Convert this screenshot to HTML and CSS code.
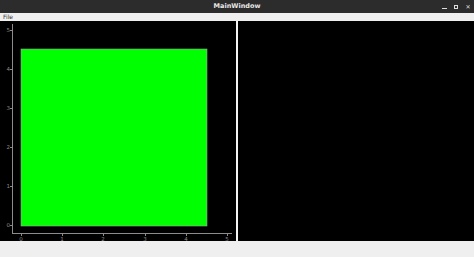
FILE: index.html
```html
<!DOCTYPE html>
<html>
<head>
<meta charset="utf-8">
<link rel="stylesheet" href="styles.css">
</head>
<body>
<div class="window">
  <div class="titlebar">
    <span class="title">MainWindow</span>
    <div class="controls">
      <span class="ctl min"></span>
      <span class="ctl max"></span>
      <span class="ctl close">✕</span>
    </div>
  </div>
  <div class="menubar"><span class="menu">File</span></div>
  <div class="main">
    <div class="plot">
      <svg width="236" height="220" viewBox="0 0 236 220">
        <rect x="21" y="28" width="186" height="177" fill="#00ff00" stroke="#a0a0a0" stroke-width="0.6"/>
        <g stroke="#8c8c8c" stroke-width="1" fill="none">
          <line x1="12.5" y1="3" x2="12.5" y2="213"/>
          <line x1="12" y1="212.5" x2="232" y2="212.5"/>
          <line x1="10" y1="9.5" x2="12" y2="9.5"/>
          <line x1="10" y1="48.5" x2="12" y2="48.5"/>
          <line x1="10" y1="87.5" x2="12" y2="87.5"/>
          <line x1="10" y1="126.5" x2="12" y2="126.5"/>
          <line x1="10" y1="165.5" x2="12" y2="165.5"/>
          <line x1="10" y1="204.5" x2="12" y2="204.5"/>
          <line x1="21.5" y1="213" x2="21.5" y2="215"/>
          <line x1="62.5" y1="213" x2="62.5" y2="215"/>
          <line x1="103.5" y1="213" x2="103.5" y2="215"/>
          <line x1="145.5" y1="213" x2="145.5" y2="215"/>
          <line x1="186.5" y1="213" x2="186.5" y2="215"/>
          <line x1="227.5" y1="213" x2="227.5" y2="215"/>
        </g>
        <g class="ylab" text-anchor="end">
          <text x="10" y="11">5</text>
          <text x="10" y="50">4</text>
          <text x="10" y="89">3</text>
          <text x="10" y="128">2</text>
          <text x="10" y="167">1</text>
          <text x="10" y="206">0</text>
        </g>
        <g class="xlab" text-anchor="middle">
          <text x="21" y="219.5">0</text>
          <text x="62" y="219.5">1</text>
          <text x="103" y="219.5">2</text>
          <text x="145" y="219.5">3</text>
          <text x="186" y="219.5">4</text>
          <text x="227" y="219.5">5</text>
        </g>
      </svg>
    </div>
    <div class="sep"></div>
    <div class="right"></div>
  </div>
  <div class="statusbar"></div>
</div>
</body>
</html>
```

FILE: styles.css
```css
html, body {
  margin: 0;
  padding: 0;
  background: #000;
}
body {
  font-family: "DejaVu Sans", "Liberation Sans", sans-serif;
}
.window {
  width: 474px;
  height: 257px;
  display: flex;
  flex-direction: column;
  overflow: hidden;
}
.titlebar {
  height: 13px;
  background: #2c2c2c;
  position: relative;
  display: flex;
  align-items: center;
  justify-content: center;
}
.title {
  color: #e8e8e8;
  font-size: 6.5px;
  font-weight: bold;
  line-height: 13px;
}
.controls {
  position: absolute;
  right: 3px;
  top: 0;
  height: 13px;
  display: flex;
  align-items: center;
  gap: 6px;
}
.ctl {
  width: 6px;
  height: 6px;
  display: flex;
  align-items: center;
  justify-content: center;
  color: #dcdcdc;
  font-size: 6px;
  line-height: 6px;
}
.min::after {
  content: "";
  width: 5px;
  height: 1px;
  background: #dcdcdc;
  margin-top: 4px;
}
.max::after {
  content: "";
  width: 4px;
  height: 4px;
  border: 1px solid #dcdcdc;
  box-sizing: border-box;
}
.menubar {
  height: 8px;
  background: #efefef;
  display: flex;
  align-items: center;
}
.menu {
  font-size: 6px;
  color: #333;
  padding-left: 3px;
  line-height: 8px;
}
.main {
  height: 220px;
  display: flex;
  background: #000;
}
.plot {
  width: 236px;
  height: 220px;
  background: #000;
}
.plot svg {
  display: block;
}
.ylab text, .xlab text {
  fill: #8c8c8c;
  font-size: 5.5px;
  font-family: "DejaVu Sans", sans-serif;
}
.sep {
  width: 2px;
  background: #f4f4f4;
}
.right {
  flex: 1;
  background: #000;
}
.statusbar {
  flex: 1;
  background: #efefef;
}
```
